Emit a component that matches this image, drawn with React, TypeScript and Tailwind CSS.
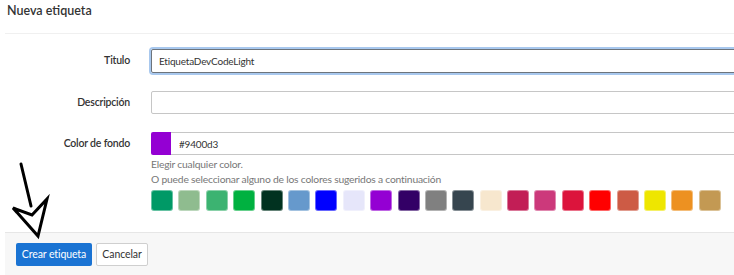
const swatches = [
  "#009966",
  "#8fbc8f",
  "#3cb371",
  "#00b140",
  "#013220",
  "#6699cc",
  "#0000ff",
  "#e6e6fa",
  "#9400d3",
  "#330066",
  "#808080",
  "#36454f",
  "#f7e7ce",
  "#c21e56",
  "#cc397b",
  "#dc143c",
  "#ff0000",
  "#cd5b45",
  "#eee600",
  "#ed9121",
  "#c39953",
]

function Arrow() {
  // flecha dibujada a mano que señala el botón
  return (
    <svg className="absolute left-0 top-0 pointer-events-none" width="60" height="245" viewBox="0 0 60 245">
      <path d="M21 164 L31 206" stroke="#000" strokeWidth="3" strokeLinecap="round" fill="none" />
      <path
        d="M13 208 L32 215 L47 199 L38 236 Z"
        stroke="#000"
        strokeWidth="3"
        strokeLinejoin="miter"
        fill="none"
      />
    </svg>
  )
}

export default function App() {
  return (
    <div className="relative w-[734px] h-[275px] overflow-hidden bg-white text-[#333] font-['Lato','Liberation_Sans',sans-serif]">
      <div className="ml-[5px] w-[800px]">
        {/* cabecera */}
        <div className="h-[34px] border-b border-[#f0f0f0] pl-[2px] pt-[2px]">
          <h4 className="text-[12.5px] font-semibold leading-[18px]">Nueva etiqueta</h4>
        </div>

        {/* cuerpo */}
        <div className="pt-[15px] h-[198px]">
          <div className="flex items-center h-[24px]">
            <label className="w-[125px] text-right text-[10.5px] tracking-[-0.2px] font-semibold">Titulo</label>
            <input
              readOnly
              value="EtiquetaDevCodeLight"
              className="ml-[21px] h-[24px] flex-1 rounded-[2px] border border-[#6d747c] px-[7px] text-[10px] tracking-[-0.2px] text-[#333] shadow-[0_0_0_2px_#a8c8ee] outline-none"
            />
          </div>

          <div className="flex items-center h-[23px] mt-[18px]">
            <label className="w-[125px] text-right text-[10.5px] tracking-[-0.2px] font-semibold">Descripción</label>
            <input
              readOnly
              value=""
              className="ml-[21px] h-[23px] flex-1 rounded-[2px] border border-[#c6c6c6] px-[7px] text-[10px] outline-none"
            />
          </div>

          <div className="flex mt-[18px]">
            <label className="w-[125px] h-[23px] flex items-center justify-end text-[10.5px] tracking-[-0.2px] font-semibold">
              Color de fondo
            </label>
            <div className="ml-[21px] flex-1">
              <div className="flex h-[23px]">
                <div className="w-[20px] h-[23px] rounded-l-[2px] bg-[#9400d3]" />
                <input
                  readOnly
                  value="#9400d3"
                  className="h-[23px] flex-1 border border-l-0 border-[#c6c6c6] px-[8px] text-[10px] tracking-[-0.2px] outline-none"
                />
              </div>
              <p className="mt-[2px] text-[10.3px] tracking-[-0.2px] leading-[15px] text-[#777]">Elegir cualquier color.</p>
              <p className="text-[10.3px] tracking-[-0.2px] leading-[15px] text-[#777]">
                O puede seleccionar alguno de los colores sugeridos a continuación
              </p>
              <div className="mt-[3px] flex gap-[5.4px]">
                {swatches.map((c) => (
                  <div
                    key={c}
                    className="w-[22px] h-[21px] rounded-[3px] border border-white/40"
                    style={{ backgroundColor: c }}
                  />
                ))}
              </div>
            </div>
          </div>
        </div>

        {/* pie */}
        <div className="h-[60px] border-t border-[#e6e6e6] bg-[#f7f7f7] pl-[11px] pt-[10px] flex gap-[4px] items-start">
          <button className="h-[23px] w-[76px] rounded-[2px] bg-[#1a73d3] text-[10.5px] tracking-[-0.1px] text-white">
            Crear etiqueta
          </button>
          <button className="h-[23px] w-[52px] rounded-[2px] border border-[#cfcfcf] bg-white text-[10.5px] tracking-[-0.1px] text-[#333]">
            Cancelar
          </button>
        </div>
      </div>
      <Arrow />
    </div>
  )
}
